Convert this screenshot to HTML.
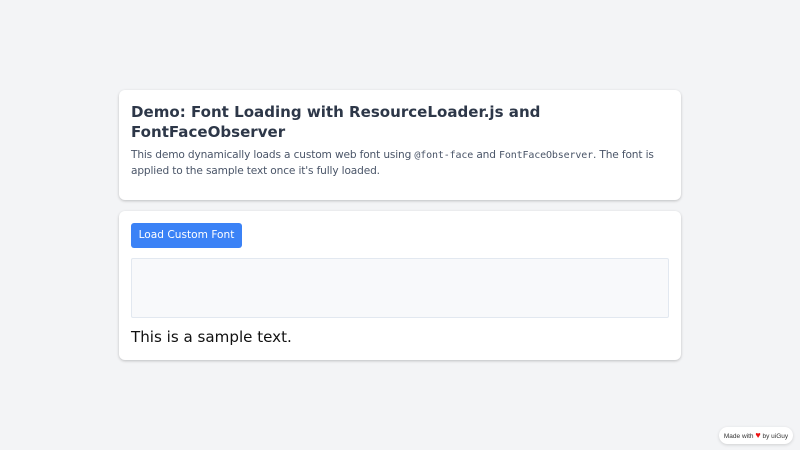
<!DOCTYPE html>
<html><head><style>
body{margin:0;width:800px;height:450px;background:#f3f4f6;font-family:"DejaVu Sans",sans-serif;position:relative;overflow:hidden}
.card{position:absolute;left:119px;width:562px;background:#fff;border-radius:6px;box-shadow:0 1px 3px rgba(0,0,0,.15),0 1px 2px rgba(0,0,0,.08)}
h1{position:absolute;left:12px;top:12px;margin:0;font-size:15.05px;line-height:20px;font-weight:bold;color:#2d3748;width:545px}
p{position:absolute;left:12px;top:58px;margin:0;font-size:10.6px;line-height:15.5px;color:#4a5568;width:545px;letter-spacing:-0.15px}
code{font-family:"DejaVu Sans Mono",monospace;font-size:10px}
.btn{position:absolute;left:12px;top:12px;width:111px;height:25px;background:#3b82f6;color:#fff;border-radius:3px;font-size:10.6px;line-height:25px;text-align:center}
.box{position:absolute;left:12px;top:47px;width:536px;height:58px;background:#f8f9fb;border:1px solid #e2e8f0;border-radius:2px}
.s{position:absolute;left:12px;top:115px;font-size:15.1px;line-height:22px;color:#111}
.badge{position:absolute;left:719px;top:427px;width:74px;height:17px;background:#fff;border-radius:9px;box-shadow:0 1px 3px rgba(0,0,0,.15);font-size:6.5px;line-height:17px;text-align:center;color:#333;font-family:"Liberation Sans",sans-serif}
</style></head><body>
<div class="card" style="top:90px;height:110px">
<h1>Demo: Font Loading with ResourceLoader.js and FontFaceObserver</h1>
<p>This demo dynamically loads a custom web font using <code>@font-face</code> and <code>FontFaceObserver</code>. The font is applied to the sample text once it's fully loaded.</p>
</div>
<div class="card" style="top:211px;height:149px">
<div class="btn">Load Custom Font</div>
<div class="box"></div>
<div class="s">This is a sample text.</div>
</div>
<div class="badge">Made with <span style="color:#e11;font-size:9px">♥</span> by uiGuy</div>
</body></html>
